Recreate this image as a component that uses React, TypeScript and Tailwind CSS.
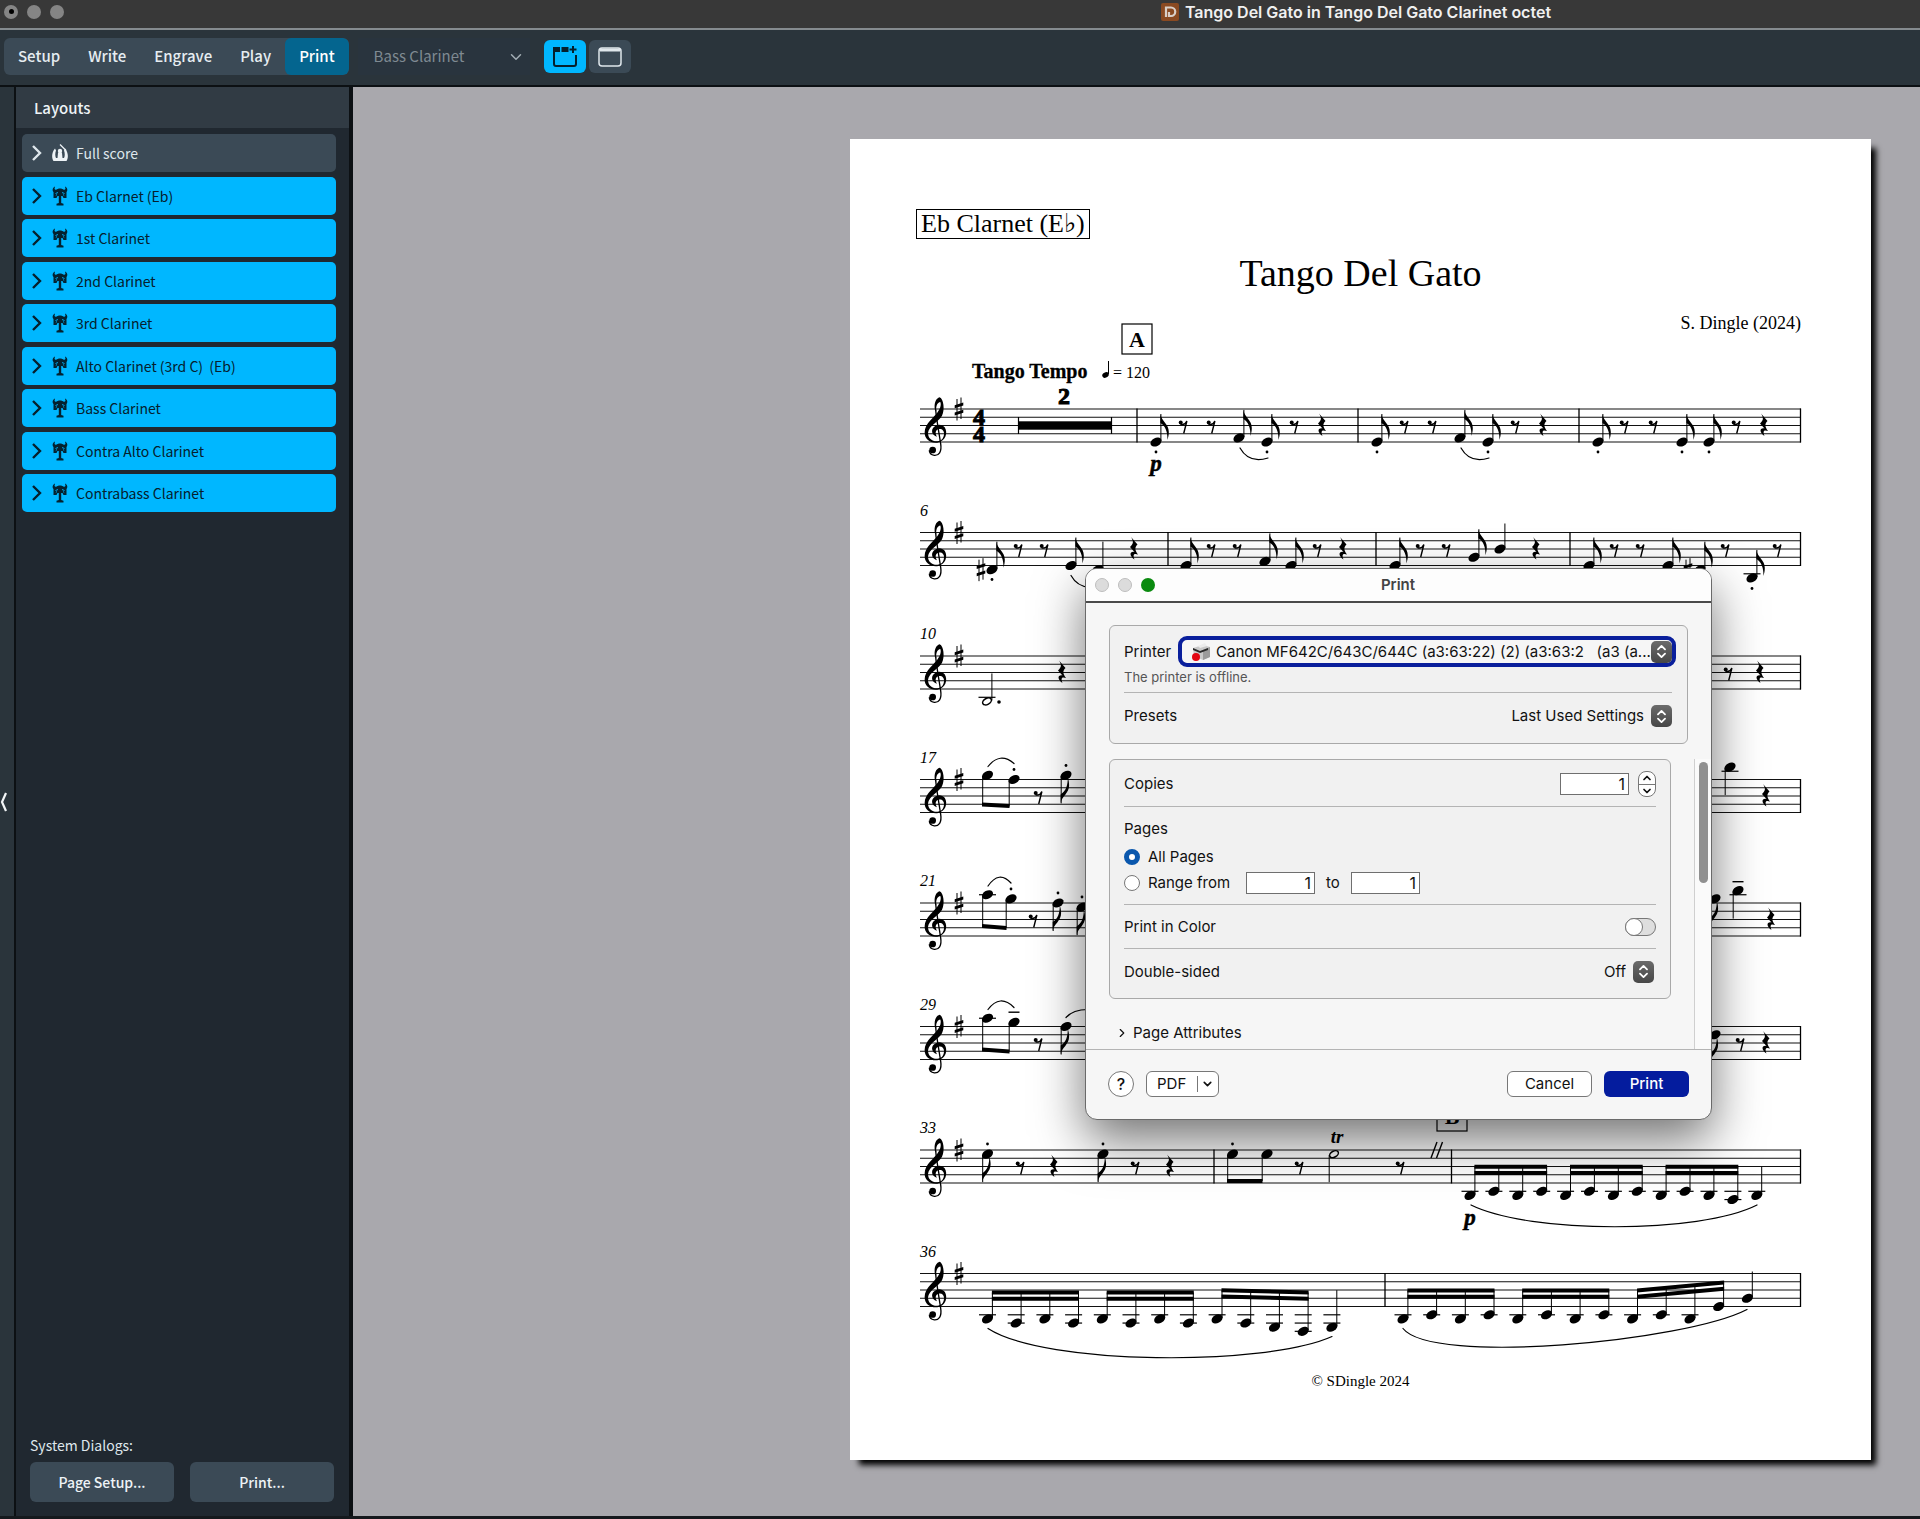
import { useState, type ReactNode } from "react";
import { ChevronDown, ChevronRight, ChevronUp, ChevronsUpDown } from "lucide-react";
import clsx from "clsx";

const MODES = ["Setup", "Write", "Engrave", "Play", "Print"];

const PARTS = [
  "Eb Clarnet (Eb)",
  "1st Clarinet",
  "2nd Clarinet",
  "3rd Clarinet",
  "Alto Clarinet (3rd C)\u00a0 (Eb)",
  "Bass Clarinet",
  "Contra Alto Clarinet",
  "Contrabass Clarinet",
];

const APP_FONT = "font-['Noto_Sans_CJK_JP','Noto_Sans',sans-serif]";
const MAC_FONT = "font-[Inter,'Liberation_Sans',sans-serif]";
const SCORE_FONT = "font-['Liberation_Serif',serif]";

/* ── Notation ── */

/** Half the distance between two staff lines */
const STEP = 4.13;
const STAFF_WIDTH = 881;
const SYSTEM_GAP = 123.5;
const STEM = 28;

const yOf = (pos: number) => pos * STEP;

function Ledgers({ x, pos }: { x: number; pos: number }) {
  const lines: number[] = [];
  for (let p = 10; p <= pos; p += 2) lines.push(p);
  for (let p = -2; p >= pos; p -= 2) lines.push(p);
  return (
    <>
      {lines.map((p) => (
        <line key={p} x1={x - 8.5} x2={x + 8.5} y1={yOf(p)} y2={yOf(p)} stroke="black" strokeWidth={1.2} />
      ))}
    </>
  );
}

type NoteProps = {
  x: number;
  pos: number;
  down?: boolean;
  flag?: boolean;
  half?: boolean;
  dot?: number;
  tenuto?: number;
  /** y of the far end of the stem, when it meets a beam */
  stemTo?: number;
};

function Note({ x, pos, down, flag, half, dot, tenuto, stemTo }: NoteProps) {
  const y = yOf(pos);
  const sx = down ? x - 4.8 : x + 4.9;
  const end = stemTo ?? (down ? y + STEM : y - STEM);
  return (
    <g>
      <Ledgers x={x} pos={pos} />
      {half ? (
        <ellipse cx={x} cy={y} rx={4.7} ry={3} fill="none" stroke="black" strokeWidth={1.5} transform={`rotate(-28 ${x} ${y})`} />
      ) : (
        <ellipse cx={x} cy={y} rx={5.9} ry={4.1} transform={`rotate(-28 ${x} ${y})`} />
      )}
      <line x1={sx} x2={sx} y1={y + (down ? 1 : -1)} y2={end} stroke="black" strokeWidth={1} />
      {flag && (
        <path
          d="M-.5 0C.5 7 8 10 7.9 18C7.9 21 7.3 23.5 6.5 26C6.9 18 4.5 12 -.5 9Z"
          transform={`translate(${sx} ${end}) scale(1 ${down ? -1 : 1})`}
        />
      )}
      {dot !== undefined && <circle cx={x} cy={dot} r={1.4} />}
      {tenuto !== undefined && <rect x={x - 5.5} y={tenuto} width={11} height={1.4} />}
    </g>
  );
}

function EighthRest({ x }: { x: number }) {
  return (
    <g transform={`translate(${x} 16.5)`}>
      <circle cx={-2.3} cy={-3} r={2} />
      <path d="M-2.5 -1.4C0 -.3 2.5 -1.6 3.9 -4.5L.7 8" fill="none" stroke="black" strokeWidth={1.4} />
    </g>
  );
}

function QuarterRest({ x }: { x: number }) {
  return (
    <path
      d="M-3 -12.5L3.5 -5C.5 -2 .8 .5 4 5C0 3.5 -1.5 5 .5 10C-5 6.5 -4.5 1.5 .5 2.5L-4 -2.5C-.3 -6 -.3 -8 -3 -12.5Z"
      transform={`translate(${x} 17)`}
    />
  );
}

function Sharp({ x, pos }: { x: number; pos: number }) {
  return (
    <g transform={`translate(${x} ${yOf(pos)})`}>
      <path d="M-2 -10V11.5M2 -11.5V10" stroke="black" strokeWidth={1} />
      <path d="M-4.3 -3.7L4.3 -6.5V-3.5L-4.3 -.7ZM-4.3 3.6L4.3 .8V3.8L-4.3 6.6Z" />
    </g>
  );
}

function Barline({ x }: { x: number }) {
  return <line x1={x} x2={x} y1={-0.5} y2={33.5} stroke="black" strokeWidth={1.3} />;
}

function Beam({ x1, y1, x2, y2 }: { x1: number; y1: number; x2: number; y2: number }) {
  return <path d={`M${x1} ${y1 - 2}L${x2} ${y2 - 2}V${y2 + 2}L${x1} ${y1 + 2}Z`} />;
}

function Slur({ d }: { d: string }) {
  return <path d={d} fill="none" stroke="black" strokeWidth={1.2} strokeLinecap="round" />;
}

function Clef() {
  return (
    <g transform="scale(.3333) translate(-60 -688)">
      <path d="M119 653C131 659 135 690 126 708C118 724 86 738 84 760C84 776 97 786 112 785C124 784 131 776 132 764C133 753 126 747 118 748C108 749 103 759 111 771C96 768 92 752 101 743C110 733 126 733 134 743C145 760 136 786 112 789C90 791 73 778 74 758C75 734 96 718 108 704C119 691 125 678 121 667C112 668 107 680 109 694L105 692C101 670 108 656 119 653Z" />
      <path d="M107 690C109 716 118 766 122 792C126 818 116 828 103 827C94 826 88 820 88 812" fill="none" stroke="black" strokeWidth={4} />
      <circle cx={98} cy={811} r={10} />
    </g>
  );
}

function RehearsalMark({ x, y, children }: { x: number; y: number; children: string }) {
  return (
    <g>
      <rect x={x} y={y} width={30} height={30} fill="none" stroke="black" strokeWidth={1.2} />
      <text x={x + 15} y={y + 23} textAnchor="middle" fontSize={22} fontWeight="bold">
        {children}
      </text>
    </g>
  );
}

function Dynamic({ x, y }: { x: number; y: number }) {
  return (
    <text x={x} y={y} textAnchor="middle" fontSize={23} fontWeight="bold" fontStyle="italic" stroke="black" strokeWidth={0.5}>
      p
    </text>
  );
}

/** Fat numerals of the time signature and the multi-bar rest */
function Numeral({ x, y, children }: { x: number; y: number; children: string }) {
  return (
    <text x={x} y={y} textAnchor="middle" fontSize={24} fontWeight="bold" stroke="black" strokeWidth={1}>
      {children}
    </text>
  );
}

function System({ index, bar, children }: { index: number; bar?: number; children: ReactNode }) {
  return (
    <g transform={`translate(0 ${70 + index * SYSTEM_GAP})`}>
      {[0, 2, 4, 6, 8].map((p) => (
        <line key={p} x1={0} x2={STAFF_WIDTH} y1={yOf(p)} y2={yOf(p)} stroke="#111" strokeWidth={1.1} />
      ))}
      <Clef />
      <Sharp x={39} pos={0} />
      <Barline x={880.5} />
      {bar && (
        <text x={0} y={-17} fontSize={16} fontStyle="italic">
          {bar}
        </text>
      )}
      {children}
    </g>
  );
}

/** Evenly spaced semiquavers in three beamed groups of four, closed by a crotchet */
function Run({
  x,
  step,
  notes,
  beams,
  last,
}: {
  x: number;
  step: number;
  notes: number[];
  beams: [number, number][];
  last: number;
}) {
  return (
    <>
      {notes.map((pos, i) => {
        const nx = x + i * step;
        if (i === notes.length - 1) return <Note key={i} x={nx} pos={pos} stemTo={last} />;
        const [from, to] = beams[Math.floor(i / 4)];
        return <Note key={i} x={nx} pos={pos} stemTo={from + ((to - from) * (i % 4)) / 3} />;
      })}
      {beams.map(([from, to], i) => {
        const x1 = x + i * 4 * step + 4.4;
        const x2 = x1 + 3 * step + 1;
        return (
          <g key={i}>
            <Beam x1={x1} y1={from} x2={x2} y2={to} />
            <Beam x1={x1} y1={from + 6.3} x2={x2} y2={to + 6.3} />
          </g>
        );
      })}
    </>
  );
}

function TangoBar({ x }: { x: number }) {
  return (
    <>
      <Note x={x} pos={8} flag dot={43} />
      <EighthRest x={x + 27} />
      <EighthRest x={x + 55} />
      <Note x={x + 83} pos={7} flag />
      <Note x={x + 111} pos={8} flag dot={43} />
      <EighthRest x={x + 138} />
      <QuarterRest x={x + 166} />
      <Slur d={`M${x + 84} 39Q${x + 93} 55 ${x + 112} 49`} />
    </>
  );
}

function Score() {
  return (
    <svg viewBox={`0 0 ${STAFF_WIDTH} 1032`} className={clsx("block w-full overflow-visible", SCORE_FONT)} role="img" aria-label="Music">
      <System index={0}>
        <text x={52} y={-31} fontSize={20} fontWeight="bold" stroke="black" strokeWidth={0.3}>
          Tango Tempo
        </text>
        <ellipse cx={185.5} cy={-34} rx={3.4} ry={2.5} transform="rotate(-28 185.5 -34)" />
        <line x1={188.5} x2={188.5} y1={-35} y2={-48} stroke="black" strokeWidth={1} />
        <text x={193} y={-31} fontSize={16}>
          = 120
        </text>
        <RehearsalMark x={202} y={-85}>A</RehearsalMark>
        <Numeral x={59} y={16}>4</Numeral>
        <Numeral x={59} y={33}>4</Numeral>
        <Numeral x={144} y={-5}>2</Numeral>
        <path d="M98.5 8V25M191.5 8V25" stroke="black" strokeWidth={1.2} />
        <rect x={98} y={12.3} width={94} height={8.4} />
        <Barline x={217} />
        <TangoBar x={236} />
        <Dynamic x={236} y={62} />
        <Barline x={438} />
        <TangoBar x={457} />
        <Barline x={659} />
        <Note x={678} pos={8} flag dot={43} />
        <EighthRest x={704} />
        <EighthRest x={733} />
        <Note x={762} pos={8} flag dot={43} />
        <Note x={789} pos={8} flag dot={43} />
        <EighthRest x={816} />
        <QuarterRest x={844} />
      </System>

      <System index={1} bar={6}>
        <Sharp x={61} pos={9} />
        <Note x={72} pos={9} flag dot={47} />
        <EighthRest x={98} />
        <EighthRest x={124} />
        <Note x={151} pos={8} flag />
        <Slur d="M151 43Q157 54 170 55" />
        <Note x={178} pos={9} />
        <QuarterRest x={214} />
        <Barline x={248} />
        <Note x={266} pos={8} flag />
        <EighthRest x={291} />
        <EighthRest x={317} />
        <Note x={345} pos={7} flag />
        <Note x={371} pos={8} flag />
        <EighthRest x={397} />
        <QuarterRest x={423} />
        <Barline x={456} />
        <Note x={475} pos={8} flag />
        <EighthRest x={500} />
        <EighthRest x={526} />
        <Note x={554} pos={6} flag />
        <Note x={580} pos={4} stemTo={-9} />
        <QuarterRest x={616} />
        <Barline x={650} />
        <Note x={669} pos={8} flag />
        <EighthRest x={694} />
        <EighthRest x={720} />
        <Note x={748} pos={8} flag />
        <Sharp x={768} pos={9} />
        <Note x={780} pos={9} flag />
        <EighthRest x={805} />
        <Note x={832} pos={11} flag dot={56} />
        <EighthRest x={857} />
      </System>

      <System index={2} bar={10}>
        <Note x={67} pos={11} half />
        <circle cx={79} cy={46} r={1.8} />
        <QuarterRest x={142} />
        <EighthRest x={808} />
        <QuarterRest x={840} />
      </System>

      <System index={3} bar={17}>
        <Note x={67.5} pos={-1} down stemTo={25} />
        <Note x={94} pos={0} down stemTo={27} dot={-10} />
        <Beam x1={62} y1={25} x2={89.5} y2={26.5} />
        <Slur d="M68 -13Q80 -28 94 -16" />
        <EighthRest x={118} />
        <Note x={146} pos={-1} down flag dot={-14} />
        <Note x={810} pos={-3} down />
        <QuarterRest x={846} />
      </System>

      <System index={4} bar={21}>
        <Note x={67.5} pos={-2} down stemTo={23} />
        <Note x={91} pos={-1} down stemTo={25} dot={-14} />
        <Beam x1={62} y1={23} x2={86.5} y2={25} />
        <Slur d="M68 -17Q79 -33 91 -20" />
        <EighthRest x={113} />
        <Note x={138} pos={0} down flag dot={-10} />
        <Note x={162} pos={1} down flag dot={-6} />
        <Note x={795} pos={-1} down flag />
        <Note x={818} pos={-3} down tenuto={-22} />
        <QuarterRest x={851} />
      </System>

      <System index={5} bar={29}>
        <Note x={67.5} pos={-2} down stemTo={23} />
        <Note x={94} pos={-1} down stemTo={25} tenuto={-15} />
        <Beam x1={62} y1={23} x2={89.5} y2={25} />
        <Slur d="M68 -17Q80 -33 94 -19" />
        <EighthRest x={118} />
        <Note x={146} pos={0} down flag />
        <Slur d="M146 -9Q153 -17 168 -17" />
        <Note x={795} pos={2} down flag />
        <EighthRest x={820} />
        <QuarterRest x={846} />
      </System>

      <System index={6} bar={33}>
        <Note x={67.5} pos={1} down flag dot={-6} />
        <EighthRest x={100} />
        <QuarterRest x={134} />
        <Note x={183} pos={1} down flag dot={-6} />
        <EighthRest x={215} />
        <QuarterRest x={250} />
        <Barline x={294} />
        <Note x={312.5} pos={1} down stemTo={31} dot={-6} />
        <Note x={347} pos={1} down stemTo={31} />
        <Beam x1={307} y1={31} x2={342.5} y2={31} />
        <EighthRest x={379} />
        <Note x={414} pos={1} down half />
        <text x={417} y={-7} textAnchor="middle" fontSize={19} fontWeight="bold" fontStyle="italic">tr</text>
        <EighthRest x={480} />
        <path d="M511 8L517 -8M516.5 8L522.5 -8" stroke="black" strokeWidth={1.4} />
        <RehearsalMark x={517} y={-49}>B</RehearsalMark>
        <Barline x={531.5} />
        <Run
          x={550}
          step={23.9}
          notes={[11, 10, 11, 10, 11, 10, 11, 10, 11, 10, 11, 12, 11]}
          beams={[[16.7, 16.7], [16.7, 16.7], [16.7, 16.7]]}
          last={16.7}
        />
        <Slur d="M551 55C610 84 780 84 837 55" />
        <Dynamic x={550} y={75} />
      </System>

      <System index={7} bar={36}>
        <Run
          x={67.5}
          step={28.7}
          notes={[11, 12, 11, 12, 11, 12, 11, 12, 11, 12, 13, 14, 13]}
          beams={[[19, 19], [19, 19], [16.7, 19]]}
          last={16.7}
        />
        <Slur d="M68 55C125 92 345 93 412 63" />
        <Barline x={465} />
        <Run
          x={483}
          step={28.7}
          notes={[11, 10, 11, 10, 11, 10, 11, 10, 11, 10, 11, 8, 6]}
          beams={[[17, 17], [17, 17], [17, 9]]}
          last={-2}
        />
        <Slur d="M483 55C512 92 765 68 827 36" />
      </System>
    </svg>
  );
}

function Sheet() {
  return (
    <article
      className={clsx(
        "w-[1021px] shrink-0 bg-white px-[70px] pt-[70px] pb-[69px] text-black shadow-[7px_7px_6px_-2px_#000]",
        SCORE_FONT,
      )}
    >
      <header className="flex flex-col">
        <p className="-ml-1 self-start border border-black px-1 text-[26px] leading-7">Eb Clarnet (E♭)</p>
        <h1 className="mt-3 text-center text-[38px] leading-[44px]">Tango Del Gato</h1>
        <p className="mt-[14px] mb-[2px] self-end text-lg leading-7">S. Dingle (2024)</p>
      </header>
      <Score />
      <footer className="text-center text-[15px] leading-5">© SDingle 2024</footer>
    </article>
  );
}

/* ── Print dialog ── */

function UpDown({ className = "right-0" }: { className?: string }) {
  return (
    <span
      className={clsx(
        "pointer-events-none absolute flex h-[22px] w-[21px] items-center justify-center rounded-[5px] bg-gradient-to-b from-[#6b6b6b] to-[#474747] text-white",
        className,
      )}
    >
      <ChevronsUpDown size={17} strokeWidth={2.5} />
    </span>
  );
}

function NumberField({ id, label }: { id?: string; label?: string }) {
  return (
    <input
      id={id}
      type="text"
      inputMode="numeric"
      aria-label={label}
      defaultValue="1"
      className="h-[22px] w-[69px] border border-[#6f6f6f] bg-white px-[3px] text-right text-base leading-5"
    />
  );
}

function Rule() {
  return <hr className="border-0 border-t border-[#b4b4b4]" />;
}

const groupClass = "rounded-md border border-[#a9a9a9] bg-[#f1f1f1] pl-[14px]";
const radioClass =
  "size-4 appearance-none rounded-full border border-[#777] bg-white checked:border-[5px] checked:border-[#0a57ad]";

function PrintDialog() {
  const [range, setRange] = useState("all");

  return (
    <section
      role="dialog"
      aria-label="Print"
      className={clsx(
        "absolute top-[481px] right-[208px] flex w-[627px] flex-col overflow-hidden rounded-xl border border-[#6a6a6a] bg-[#f6f6f6] text-[15px] leading-5 text-[#111] shadow-[0_20px_50px_rgba(0,0,0,0.55)]",
        MAC_FONT,
      )}
    >
      <div className="relative flex h-[34px] items-center gap-[9px] border-b-2 border-[#4a4a4a] bg-[#fdfdfd] px-[9px]">
        <span className="size-[14px] rounded-full border border-[#bdbdbd] bg-[#dcdcdc]" />
        <span className="size-[14px] rounded-full border border-[#bdbdbd] bg-[#dcdcdc]" />
        <span className="size-[14px] rounded-full bg-[#0a8a0f]" />
        <h2 className="flex-1 pr-[70px] text-center font-semibold text-[#444]">Print</h2>
      </div>

      <div className="px-[23px] pt-[22px]">
        <div className={clsx(groupClass, "h-[119px] pt-[10px] pr-[15px]")}>
          <div className="-mr-1 flex items-center justify-between">
            <label htmlFor="printer">Printer</label>
            <div className="relative flex h-[31px] w-[498px] items-center rounded-[9px] border-4 border-[#0a1f9c] bg-[#f6f6f6]">
              <svg viewBox="0 0 20 20" className="ml-[9px] size-5 shrink-0">
                <path d="M2 6L12 3L19 5V15L12 18L3 14Z" fill="#c9c9c9" />
                <path d="M12 8L19 5V15L12 18Z" fill="#9b9b9b" />
                <path d="M7 4L14 1L16 4L9 6Z" fill="#ececec" />
                <path d="M2 6L9 9L17 6V8L9 11L2 8Z" fill="#2b2b2b" />
                <circle cx={5} cy={15} r={4} fill="#e30613" />
              </svg>
              <select id="printer" className="w-full appearance-none bg-transparent pr-[18px] pl-[5px] outline-none">
                <option>Canon MF642C/643C/644C (a3:63:22) (2) (a3:63:2&nbsp;&nbsp; (a3 (a...</option>
              </select>
              <UpDown />
            </div>
          </div>
          <p className="text-[13px] text-[#555]">The printer is offline.</p>
          <div className="mt-[5px]">
            <Rule />
          </div>
          <div className="relative mt-[13px] flex items-center justify-between">
            <label htmlFor="presets">Presets</label>
            <select id="presets" className="appearance-none bg-transparent pr-7 text-right">
              <option>Last Used Settings</option>
            </select>
            <UpDown />
          </div>
        </div>
      </div>

      <div className="mt-[15px] flex h-[290px]">
        <div className="flex-1 pl-[23px]">
          <div className={clsx(groupClass, "h-[240px] w-[562px] pr-[14px]")}>
            <div className="flex h-[46px] items-center pt-[2px]">
              <label className="flex-1" htmlFor="copies">Copies</label>
              <NumberField id="copies" />
              <div className="ml-[9px] flex h-[26px] w-[18px] flex-col divide-y divide-[#777] overflow-hidden rounded-lg border border-[#777] bg-white">
                <button aria-label="More copies" className="flex flex-1 items-center justify-center">
                  <ChevronUp size={12} strokeWidth={3.5} />
                </button>
                <button aria-label="Fewer copies" className="flex flex-1 items-center justify-center">
                  <ChevronDown size={12} strokeWidth={3.5} />
                </button>
              </div>
            </div>
            <Rule />
            <fieldset className="h-[97px] pt-3">
              <legend className="float-left w-full">Pages</legend>
              <label className="flex w-full items-center gap-2 pt-2">
                <input
                  type="radio"
                  name="pages"
                  checked={range === "all"}
                  onChange={() => setRange("all")}
                  className={radioClass}
                />
                All Pages
              </label>
              <div className="mt-[5px] flex items-center">
                <label className="flex w-[122px] items-center gap-2">
                  <input
                    type="radio"
                    name="pages"
                    checked={range === "range"}
                    onChange={() => setRange("range")}
                    className={radioClass}
                  />
                  Range from
                </label>
                <NumberField label="First page" />
                <span className="w-9 text-center">to</span>
                <NumberField label="Last page" />
              </div>
            </fieldset>
            <Rule />
            <div className="flex h-[43px] items-center justify-between">
              <label htmlFor="color">Print in Color</label>
              <span className="relative flex h-[18px] w-[31px] items-center rounded-full border border-[#777] bg-[#dedede]">
                <span className="-ml-px size-[18px] rounded-full border border-[#777] bg-white" />
                <input id="color" type="checkbox" className="absolute inset-0 size-full opacity-0" />
              </span>
            </div>
            <Rule />
            <div className="relative flex h-[47px] items-center justify-between pb-[2px]">
              <label htmlFor="duplex">Double-sided</label>
              <select id="duplex" className="appearance-none bg-transparent pr-[30px] text-right">
                <option>Off</option>
              </select>
              <UpDown className="right-[2px]" />
            </div>
          </div>
          <button className="mt-6 ml-[6px] flex items-center gap-1">
            <ChevronRight size={14} />
            Page Attributes
          </button>
        </div>
        <div className="w-[17px] border-l border-[#cfcfcf] bg-[#fafafa] pt-[3px] pl-1">
          <div className="h-[121px] w-[9px] rounded-full bg-[#909090]" />
        </div>
      </div>

      <div className="flex items-center border-t border-[#b4b4b4] px-[22px] pt-[21px] pb-[22px]">
        <button aria-label="Help" className="size-[26px] rounded-full border border-[#777] bg-white text-base leading-5 font-medium">
          ?
        </button>
        <button className="ml-3 flex h-[26px] w-[73px] items-center justify-between rounded-md border border-[#777] bg-white pr-1 pl-[10px]">
          PDF
          <span className="flex items-center gap-[3px] border-l border-[#777] pl-[3px]">
            <ChevronDown size={13} strokeWidth={3} className="h-4" />
          </span>
        </button>
        <button className="ml-auto h-[26px] w-[85px] rounded-md border border-[#777] bg-white">Cancel</button>
        <button className="ml-3 h-[26px] w-[85px] rounded-md bg-[#041c9e] font-medium text-white">Print</button>
      </div>
    </section>
  );
}

/* ── Application chrome ── */

function ScoreIcon() {
  return (
    <svg viewBox="0 0 16 18" className="h-[18px] w-4" fill="#eef3f6">
      <path d="M3 4.500C-.5 8.500-.5 14 1.500 17H14.500C16.500 14 16.500 8.500 13 4.500L12 6.500C13 9 13 12 12 14H10.500L10 9C9.500 7.500 6.500 7.500 6 9L5.500 14H4C3 12 3 9 4 6.500Z" />
      <circle cx={8} cy={7} r={2.2} />
      <path d="M6.500 9H9.500L10 14H6Z" />
      <path d="M8 .5L14 6.500" stroke="#eef3f6" strokeWidth={1.2} />
    </svg>
  );
}

function PartIcon() {
  return (
    <svg viewBox="0 0 16 20" className="h-5 w-4" fill="#04222f">
      <path d="M3 .5C.2 1.500.2 5 1.500 6V12H4.500L5.500 10H6.800V17L4.500 17.700V19.500H11.500V17.700L9.200 17V10H10.500L11.500 12H14.500V6C15.800 5 15.800 1.500 13 .5L13.500 3L12 4C10 2 6 2 4 4L2.500 3Z" />
      <path d="M3.500 7.500L6 6.500M12.500 7.500L10 6.500M3.800 9.500L5 8.500M12.200 9.500L11 8.500" stroke="#00b7ff" strokeWidth={0.9} />
    </svg>
  );
}

function LayoutRow({ name, selected }: { name: string; selected?: boolean }) {
  return (
    <li>
      <button
        className={clsx(
          "flex h-[38px] w-full items-center rounded-[5px] pl-[9px] text-left",
          selected ? "bg-[#00b7ff] text-[#06202d]" : "bg-[#3b4a56] text-[#dfe7ec]",
        )}
      >
        <svg viewBox="0 0 12 16" className="h-4 w-3" fill="none" stroke="currentColor" strokeWidth={2.4}>
          <path d="M2 1L9 8L2 15" />
        </svg>
        <span className="mr-2 ml-[9px]">{selected ? <PartIcon /> : <ScoreIcon />}</span>
        {name}
      </button>
    </li>
  );
}

function TitleBar() {
  return (
    <div className="flex h-[30px] items-center border-b-2 border-[#858b8f] bg-[#383838] pb-[5px]">
      <div className="flex w-[792px] gap-[9px] pl-1">
        <span className="flex size-[14px] items-center justify-center rounded-full bg-[#858585]">
          <span className="size-[5px] rounded-full bg-black" />
        </span>
        <span className="size-[14px] rounded-full bg-[#858585]" />
        <span className="size-[14px] rounded-full bg-[#858585]" />
      </div>
      <h1 className={clsx("flex flex-1 items-center justify-center gap-[6px] text-base leading-5 font-semibold text-[#f0f0f0]", MAC_FONT)}>
        <svg viewBox="0 0 18 18" className="size-[18px]">
          <rect width={18} height={18} rx={2} fill="#8a4a22" />
          <path d="M5 14V4.500H10A4 4 0 0 1 10 13H8V9" fill="none" stroke="#d9cfc8" strokeWidth={2.2} />
        </svg>
        Tango Del Gato in Tango Del Gato Clarinet octet
      </h1>
    </div>
  );
}

function Toolbar() {
  const [mode, setMode] = useState("Print");

  return (
    <nav className="flex h-[57px] items-center border-b-2 border-[#0c1013] bg-[#2a343b] pb-[2px] pl-1 text-[15px]">
      <div className="flex h-[37px] overflow-hidden rounded-md bg-[#3b4a56]">
        {MODES.map((name) => (
          <button
            key={name}
            onClick={() => setMode(name)}
            className={clsx("px-[14px] font-medium", name === mode ? "rounded-md bg-[#04658f] text-white" : "text-[#e6edf1]")}
          >
            {name}
          </button>
        ))}
      </div>
      <div className="relative ml-[9px] flex h-[37px] w-[172px] items-center bg-[#29343e]">
        <select aria-label="Layout" disabled className="w-full appearance-none bg-transparent pl-4 text-[#7f8a92]">
          <option>Bass Clarinet</option>
        </select>
        <ChevronDown size={18} className="pointer-events-none absolute right-[5px] text-[#a3adb4]" />
      </div>
      <button aria-label="Tabs" className="ml-[14px] flex h-[33px] w-[42px] items-center justify-center rounded-md bg-[#00b7ff]">
        <svg viewBox="0 0 24 22" className="h-[22px] w-6" fill="none" stroke="#05202c" strokeWidth={2}>
          <path d="M1 6V18A2 2 0 0 0 3 20H21A2 2 0 0 0 23 18V9" />
          <path d="M0 3.500H7M8.500 3.500H15.500" strokeWidth={5} />
          <path d="M20 0V7M16.500 3.500H23.500" />
        </svg>
      </button>
      <button aria-label="Window" className="ml-[3px] flex h-[33px] w-[42px] items-center justify-center rounded-md bg-[#3b4a56]">
        <svg viewBox="0 0 24 20" className="h-5 w-6" fill="none" stroke="#dfe7ec" strokeWidth={1.5}>
          <rect x={1} y={1} width={22} height={18} rx={3} />
          <path d="M2 3H22" strokeWidth={3} />
        </svg>
      </button>
    </nav>
  );
}

function LayoutsPanel() {
  return (
    <aside className="flex w-[339px] shrink-0 flex-col border-r-4 border-l-2 border-[#0c1013] bg-[#202830] text-sm text-[#dfe7ec]">
      <h2 className="bg-[#313b44] pt-[11px] pb-[10px] pl-[18px] text-[15px] leading-5 font-medium text-[#eef3f6]">Layouts</h2>
      <ul className="mt-[6px] mr-[13px] ml-[6px] flex h-[378px] flex-col justify-between">
        <LayoutRow name="Full score" />
        {PARTS.map((name) => (
          <LayoutRow key={name} name={name} selected />
        ))}
      </ul>
      <div className="mt-auto px-[14px] pb-[14px]">
        <p className="mb-[7px] leading-5">System Dialogs:</p>
        <div className="flex gap-4 pr-[1px]">
          <button className="h-10 flex-1 rounded-md bg-[#3b4a56] font-medium text-[#eef3f6]">Page Setup...</button>
          <button className="h-10 flex-1 rounded-md bg-[#3b4a56] font-medium text-[#eef3f6]">Print...</button>
        </div>
      </div>
    </aside>
  );
}

export default function App() {
  return (
    <div className={clsx("flex min-h-screen flex-col overflow-x-hidden border-b-[3px] border-[#15191d] bg-[#2a343b]", APP_FONT)}>
      <TitleBar />
      <Toolbar />
      <div className="flex flex-1">
        <button aria-label="Hide panel" className="flex w-[14px] shrink-0 items-center bg-[#2a343b]">
          <svg viewBox="0 0 8 20" className="h-5 w-2" fill="none" stroke="#f2f5f7" strokeWidth={2.2}>
            <path d="M6 1L2 10L6 19" />
          </svg>
        </button>
        <LayoutsPanel />
        <main className="relative flex flex-1 items-start justify-end bg-[#a9a8ad] pt-[52px] pr-[49px] pb-12">
          <Sheet />
          <PrintDialog />
        </main>
      </div>
    </div>
  );
}
